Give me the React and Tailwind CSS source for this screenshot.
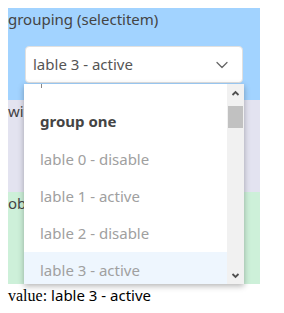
import { ChevronDown } from 'lucide-react'

const SANS = { fontFamily: '"Noto Sans", "Open Sans", sans-serif' }

const OPTIONS = [
  { label: 'lable 0 - disable' },
  { label: 'lable 1 - active' },
  { label: 'lable 2 - disable' },
  { label: 'lable 3 - active', selected: true },
]

function ScrollArrow({ up }) {
  return (
    <svg width="9" height="6" viewBox="0 0 9 6" className="block">
      <polyline
        points={up ? '1.5,5 4.5,2 7.5,5' : '1.5,1 4.5,4 7.5,1'}
        fill="none"
        stroke="#505050"
        strokeWidth="1.8"
      />
    </svg>
  )
}

export default function App() {
  return (
    <div className="p-2 text-[15px] text-[#444]">
      <div className="relative w-[252px]" style={SANS}>
        {/* grouping panel */}
        <div className="h-[92px] bg-[#a2d3ff]">
          <div className="leading-[22px]">grouping (selectitem)</div>
          <div className="ml-[17px] mt-[16px] w-[218px] h-[37px] bg-white border border-[#e0e0e0] rounded-[4px] flex items-center justify-between pl-[7px] pr-[10px] text-[#555]">
            <span>lable 3 - active</span>
            <ChevronDown size={20} strokeWidth={1.5} className="text-[#666]" />
          </div>
        </div>

        {/* with label panel */}
        <div className="h-[92px] bg-[#e3e3f0]">
          <div className="leading-[22px]">with label</div>
        </div>

        {/* object panel */}
        <div className="h-[92px] bg-[#cdf0d9]">
          <div className="leading-[22px]">object value</div>
        </div>

        {/* open dropdown */}
        <div className="absolute left-[16px] top-[76px] w-[220px] h-[200px] bg-white shadow-[0_2px_6px_rgba(0,0,0,0.3)] flex overflow-hidden">
          <div className="flex-1 relative">
            <div className="absolute left-[17px] top-0 w-px h-[4px] bg-[#888]" />
            <div className="mt-[18px]">
              <div className="h-[39px] flex items-center pl-[16px] font-bold text-[#444]">group one</div>
              {OPTIONS.map(o => (
                <div
                  key={o.label}
                  className={`h-[37px] flex items-center pl-[16px] text-[#a0a0a0] ${o.selected ? 'bg-[#eef6fe]' : ''}`}
                >
                  {o.label}
                </div>
              ))}
            </div>
          </div>
          <div className="w-[17px] bg-[#f1f1f1] flex flex-col items-center">
            <div className="h-[17px] flex items-center justify-center">
              <ScrollArrow up />
            </div>
            <div className="w-[15px] h-[22px] bg-[#c1c1c1] mt-[5px]" />
            <div className="flex-1" />
            <div className="h-[17px] flex items-center justify-center">
              <ScrollArrow />
            </div>
          </div>
        </div>
      </div>

      <div className="mt-[1px] text-black leading-[20px]">
        <span className="text-[16px]" style={{ fontFamily: '"Liberation Serif", "Times New Roman", serif' }}>value: </span>
        <span className="text-[15px]" style={SANS}>lable 3 - active</span>
      </div>
    </div>
  )
}
